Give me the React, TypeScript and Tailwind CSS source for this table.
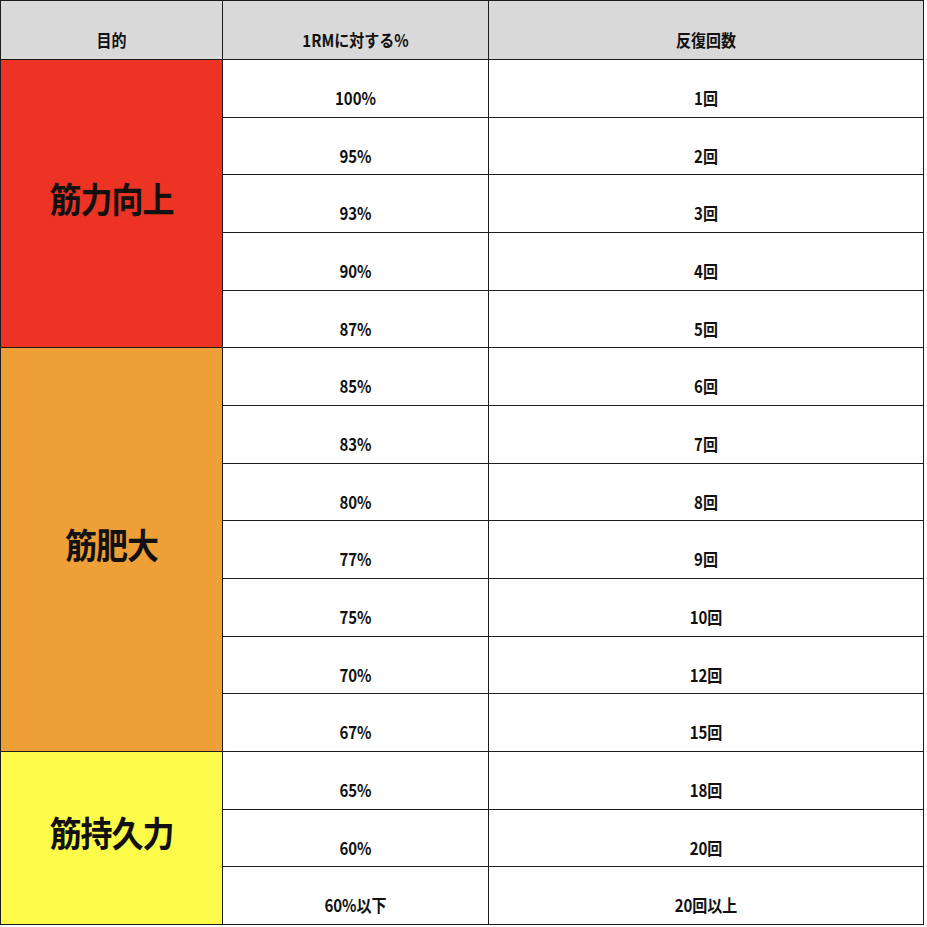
const groups = [
  {
    label: "筋力向上",
    color: "bg-[#ec3324]",
    rows: [
      ["100%", "1回"],
      ["95%", "2回"],
      ["93%", "3回"],
      ["90%", "4回"],
      ["87%", "5回"],
    ],
  },
  {
    label: "筋肥大",
    color: "bg-[#ef9f38]",
    rows: [
      ["85%", "6回"],
      ["83%", "7回"],
      ["80%", "8回"],
      ["77%", "9回"],
      ["75%", "10回"],
      ["70%", "12回"],
      ["67%", "15回"],
    ],
  },
  {
    label: "筋持久力",
    color: "bg-[#fdfb4a]",
    rows: [
      ["65%", "18回"],
      ["60%", "20回"],
      ["60%以下", "20回以上"],
    ],
  },
];

const cell = "border-[1.5px] border-[#1c1c1c] text-center align-middle";

export default function App() {
  return (
    <div className="h-[927px] w-[927px] bg-white font-['Noto_Sans_CJK_JP',sans-serif] font-bold text-[#111]">
      <table className="w-[923px] table-fixed border-collapse">
        <colgroup>
          <col className="w-[222px]" />
          <col className="w-[266px]" />
          <col className="w-[435px]" />
        </colgroup>
        <thead>
          <tr className="h-[59px] bg-[#d9d9d9] text-[15px]">
            <th className={`${cell} pt-[20px]`}>
              <span className="inline-block scale-y-110">目的</span>
            </th>
            <th className={`${cell} pt-[20px]`}>
              <span className="inline-block scale-y-110">1RMに対する%</span>
            </th>
            <th className={`${cell} pt-[20px]`}>
              <span className="inline-block scale-y-110">反復回数</span>
            </th>
          </tr>
        </thead>
        <tbody>
          {groups.map((group) =>
            group.rows.map(([pct, reps], i) => (
              <tr key={group.label + pct + reps} className="h-[57.67px] text-[15px]">
                {i === 0 && (
                  <td
                    rowSpan={group.rows.length}
                    className={`${cell} ${group.color} pb-[12px] text-[32px] tracking-[-1px]`}
                  >
                    <span className="inline-block scale-y-110">{group.label}</span>
                  </td>
                )}
                <td className={`${cell} pt-[20px]`}>
                  <span className="inline-block scale-y-115">{pct}</span>
                </td>
                <td className={`${cell} pt-[20px]`}>
                  <span className="inline-block scale-y-115">{reps}</span>
                </td>
              </tr>
            ))
          )}
        </tbody>
      </table>
    </div>
  );
}
